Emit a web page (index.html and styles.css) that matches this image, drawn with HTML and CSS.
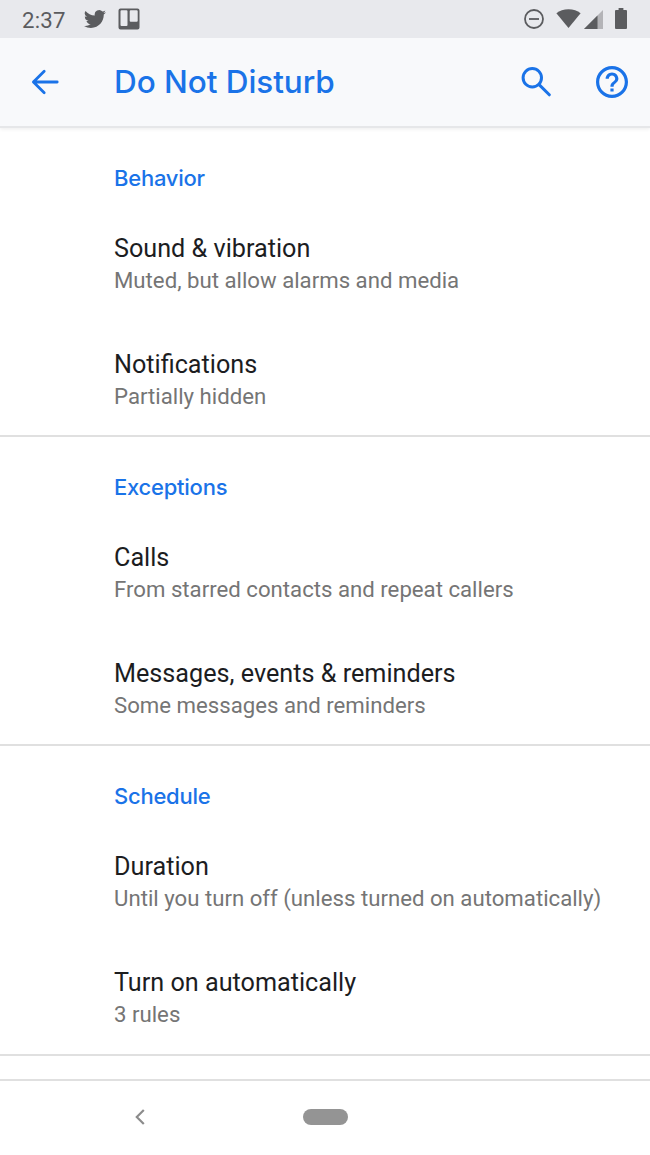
FILE: index.html
```html
<!DOCTYPE html>
<html lang="en">
<head>
<meta charset="utf-8">
<title>Do Not Disturb</title>
<link rel="stylesheet" href="styles.css">
</head>
<body>
<div class="screen">
  <div class="status">
    <span class="clock">2:37</span>
    <svg class="twitter" viewBox="0 0 24 24"><path d="M23.95 4.57a10 10 0 0 1-2.82.77 4.96 4.96 0 0 0 2.16-2.72c-.95.55-2 .95-3.13 1.18a4.92 4.92 0 0 0-8.38 4.48C7.69 8.1 4.07 6.13 1.64 3.16a4.9 4.9 0 0 0 1.52 6.57 4.9 4.9 0 0 1-2.23-.61v.06a4.92 4.92 0 0 0 3.95 4.83 5 5 0 0 1-2.21.08 4.94 4.94 0 0 0 4.6 3.42A9.87 9.87 0 0 1 0 19.54a13.99 13.99 0 0 0 7.55 2.21c9.05 0 14-7.5 14-13.98 0-.21 0-.42-.02-.63a9.94 9.94 0 0 0 2.42-2.57z"/></svg>
    <svg class="board" viewBox="0 0 22 22"><path fill-rule="evenodd" d="M2.500.5h17a2 2 0 0 1 2 2v17a2 2 0 0 1-2 2h-17a2 2 0 0 1-2-2v-17a2 2 0 0 1 2-2zM3.500 2.200q-1 0-1 1v13.800q0 1 1 1h5q1 0 1-1V3.200q0-1-1-1zM12.700 2.200q-1 0-1 1v9.600q0 1 1 1h6q1 0 1-1V3.200q0-1-1-1z"/></svg>
    <span class="grow"></span>
    <svg class="dnd" viewBox="0 0 20 20"><circle cx="10" cy="10" r="9" fill="none" stroke="#5b5c5f" stroke-width="1.8"/><path d="M5 9.1h10v1.8H5z"/></svg>
    <svg class="wifi" viewBox="0 0 25 19"><path d="M12.500 19 .4 4.200C3.600 1.700 7.700.2 12.500.2S21.400 1.700 24.600 4.200z"/></svg>
    <svg class="signal" viewBox="0 0 19 19"><path opacity=".38" d="M19 0v19H0z"/><path d="M13.500 5.500V19H0z"/></svg>
    <svg class="battery" viewBox="0 0 12 21"><path d="M3.600 0h4.800v2.100H11a1 1 0 0 1 1 1V20a1 1 0 0 1-1 1H1a1 1 0 0 1-1-1V3.100a1 1 0 0 1 1-1h2.600z"/></svg>
  </div>
  <header class="bar">
    <svg class="back" viewBox="0 0 28 26"><path d="M26.200 13H2.500M13.200 2.200 2.400 13l10.800 10.800"/></svg>
    <h1>Do Not Disturb</h1>
    <svg class="search" viewBox="0 0 30 30"><circle cx="11.300" cy="10.800" r="9.200"/><path d="m18.100 17.600 10.200 10.200"/></svg>
    <svg class="help" viewBox="2 2 20 20"><path d="M11 18h2v-2h-2v2zm1-16C6.480 2 2 6.480 2 12s4.480 10 10 10 10-4.480 10-10S17.520 2 12 2zm0 18c-4.410 0-8-3.590-8-8s3.590-8 8-8 8 3.590 8 8-3.590 8-8 8zm0-14c-2.210 0-4 1.790-4 4h2c0-1.100.9-2 2-2s2 .9 2 2c0 2-3 1.750-3 5h2c0-2.250 3-2.500 3-5 0-2.210-1.790-4-4-4z"/></svg>
  </header>
  <main>
    <section>
      <h2>Behavior</h2>
      <div class="item"><div class="name">Sound &amp; vibration</div><div class="sub">Muted, but allow alarms and media</div></div>
      <div class="item"><div class="name">Notifications</div><div class="sub">Partially hidden</div></div>
    </section>
    <section>
      <h2>Exceptions</h2>
      <div class="item"><div class="name">Calls</div><div class="sub">From starred contacts and repeat callers</div></div>
      <div class="item"><div class="name">Messages, events &amp; reminders</div><div class="sub">Some messages and reminders</div></div>
    </section>
    <section>
      <h2>Schedule</h2>
      <div class="item"><div class="name">Duration</div><div class="sub">Until you turn off (unless turned on automatically)</div></div>
      <div class="item"><div class="name">Turn on automatically</div><div class="sub">3 rules</div></div>
    </section>
  </main>
  <nav>
    <svg class="navback" viewBox="0 0 10 16"><path d="M8.800 1 1.800 8l7 7"/></svg>
    <span class="pill"></span>
  </nav>
</div>
</body>
</html>
```
FILE: styles.css
```css
* { box-sizing: border-box; margin: 0; padding: 0; }
body { margin: 0; background: #fff; font-family: Roboto, sans-serif; }
svg { display: block; flex: none; }
.screen { width: 650px; height: 1155px; display: flex; flex-direction: column; overflow: hidden; }
.status { height: 38px; flex: none; background: #e8e9ed; display: flex; align-items: center; padding: 0 23px 0 22px; fill: #5b5c5f; }
.clock { width: 62px; font-size: 22.200px; letter-spacing: 0.200px; line-height: 38px; padding-top: 1px; color: #5b5c5f; white-space: nowrap; }
.twitter { width: 22px; height: 22px; margin-right: 12px; }
.board { width: 22px; height: 22px; }
.grow { flex: 1; }
.dnd { width: 20px; height: 20px; margin-right: 12px; }
.wifi { width: 25px; height: 19px; margin-right: 3px; margin-bottom: 2px; }
.signal { width: 19px; height: 19px; margin-right: 12px; }
.battery { width: 12px; height: 21px; margin-bottom: 1px; }
.bar { height: 88px; flex: none; background: #f8f9fb; display: flex; align-items: center; padding: 0 22px 0 31px; box-shadow: 0 2px 0 #e6e7e9, 0 3px 4px rgba(0,0,0,.08); position: relative; }
.back { width: 28px; height: 26px; fill: none; stroke: #1a73e8; stroke-width: 2.800; stroke-linecap: round; stroke-linejoin: round; margin-right: 55px; }
h1 { flex: 1; font: 500 31.500px/40px Inter, sans-serif; letter-spacing: -0.060px; color: #1a73e8; white-space: nowrap; }
.search { width: 30px; height: 30px; fill: none; stroke: #1a73e8; stroke-width: 3; stroke-linecap: round; margin-right: 45px; }
.help { width: 32px; height: 32px; fill: #1a73e8; }
main { flex: 1; min-height: 0; padding-top: 2px; overflow: hidden; }
section { height: 309.200px; padding: 37px 0 0 114px; border-bottom: 2px solid #e0e0e0; }
h2 { font: 500 22px/26px Inter, sans-serif; letter-spacing: -0.240px; color: #1a73e8; margin-bottom: 14px; white-space: nowrap; }
.item { height: 115.600px; padding-top: 28px; white-space: nowrap; }
.name { font-size: 25.200px; line-height: 32px; color: #1c1d1f; }
.sub { font-size: 22.200px; line-height: 30px; color: #757575; }
nav { height: 76px; flex: none; border-top: 2px solid #e0e0e0; display: flex; align-items: center; padding: 0 0 2px 135px; }
.navback { width: 10px; height: 16px; fill: none; stroke: #8c8c8c; stroke-width: 2.200; margin-right: 157.500px; }
.pill { width: 45px; height: 16px; border-radius: 8px; background: #949494; }
```
